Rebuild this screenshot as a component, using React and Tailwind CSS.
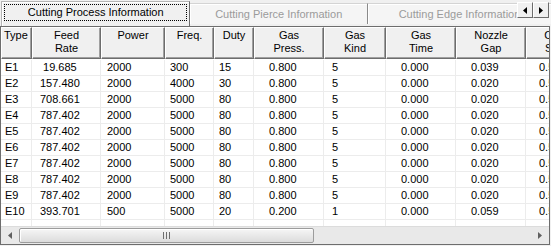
import React from "react";

const cols = [
  { w: "w-[31px]", h: ["Type"], left: true, pl: "pl-[4px]" },
  { w: "w-[69px]", h: ["Feed", "Rate"], pl: "pl-[8px]" },
  { w: "w-[64px]", h: ["Power"], pl: "pl-[6px]" },
  { w: "w-[49px]", h: ["Freq."], pl: "pl-[5px]" },
  { w: "w-[40px]", h: ["Duty"], pl: "pl-[5px]" },
  { w: "w-[70px]", h: ["Gas", "Press."], pl: "pl-[15px]" },
  { w: "w-[62px]", h: ["Gas", "Kind"], pl: "pl-[8px]" },
  { w: "w-[70px]", h: ["Gas", "Time"], pl: "pl-[15px]" },
  { w: "w-[70px]", h: ["Nozzle", "Gap"], pl: "pl-[15px]" },
  { w: "w-[70px]", h: ["Corner", "Speed"], pl: "pl-[13px]" },
];

const rows = [
  ["E1", " 19.685", "2000", "300", "15", "0.800", "5", "0.000", "0.039", "0.500"],
  ["E2", "157.480", "2000", "4000", "30", "0.800", "5", "0.000", "0.020", "0.500"],
  ["E3", "708.661", "2000", "5000", "80", "0.800", "5", "0.000", "0.020", "0.500"],
  ["E4", "787.402", "2000", "5000", "80", "0.800", "5", "0.000", "0.020", "0.500"],
  ["E5", "787.402", "2000", "5000", "80", "0.800", "5", "0.000", "0.020", "0.500"],
  ["E6", "787.402", "2000", "5000", "80", "0.800", "5", "0.000", "0.020", "0.500"],
  ["E7", "787.402", "2000", "5000", "80", "0.800", "5", "0.000", "0.020", "0.500"],
  ["E8", "787.402", "2000", "5000", "80", "0.800", "5", "0.000", "0.020", "0.500"],
  ["E9", "787.402", "2000", "5000", "80", "0.800", "5", "0.000", "0.020", "0.500"],
  ["E10", "393.701", "500", "5000", "20", "0.200", "1", "0.000", "0.059", "0.500"],
  ["", "", "", "", "", "", "", "", "", ""],
];

function Tri({ dir }) {
  return (
    <svg width="4" height="7" viewBox="0 0 4 7">
      {dir === "left" ? (
        <polygon points="4,0 0,3.5 4,7" fill="#000" />
      ) : (
        <polygon points="0,0 4,3.5 0,7" fill="#000" />
      )}
    </svg>
  );
}

function TabStrip() {
  return (
    <div className="relative h-[26px] flex items-start pl-[1px] overflow-hidden">
      <div className="relative z-10 w-[193px] h-[26px] mt-[1px] bg-[#f0f0f0] border-l border-t border-r border-l-[#b4b4b4] border-t-[#b4b4b4] border-r-[#6d6d6d] shadow-[inset_1px_1px_0_#ffffff] p-[2px]">
        <div className="h-[17px] border border-dotted border-black flex items-center justify-center text-black">
          Cutting Process Information
        </div>
      </div>
      <div className="w-[181px] h-[21px] mt-[3px] bg-[#f5f5f5] border-t border-r border-t-[#d4d4d4] border-r-[#8a8a8a] shadow-[inset_1px_1px_0_#ffffff] flex items-center justify-center text-[#9b9b9b]">
        Cutting Pierce Information
      </div>
      <div className="w-[183px] shrink-0 h-[21px] mt-[3px] bg-[#f5f5f5] border-t border-t-[#d4d4d4] shadow-[inset_1px_1px_0_#ffffff] flex items-center justify-center text-[#9b9b9b]">
        Cutting Edge Information
      </div>
      <div className="absolute top-[2px] left-[517px] flex">
        <div className="w-[16px] h-[16px] bg-[#f0f0f0] border border-t-white border-l-white border-r-[#6d6d6d] border-b-[#6d6d6d] flex items-center justify-center">
          <Tri dir="left" />
        </div>
        <div className="w-[16px] h-[16px] bg-[#f0f0f0] border border-t-white border-l-white border-r-[#6d6d6d] border-b-[#6d6d6d] flex items-center justify-center">
          <Tri dir="right" />
        </div>
      </div>
    </div>
  );
}

function Header() {
  return (
    <div className="flex h-[32px] shrink-0 bg-[#f0f0f0]">
      {cols.map((c, i) => (
        <div
          key={i}
          className={`${c.w} shrink-0 h-[32px] border-t border-l border-r border-b border-t-white border-l-white border-r-[#6d6d6d] border-b-[#6d6d6d] shadow-[inset_-1px_-1px_0_#a0a0a0] pt-[1px] leading-[13px] flex flex-col ${c.left ? "items-start pl-[2px]" : "items-center"}`}
        >
          {c.h.map((t, j) => (
            <span key={j} className="whitespace-nowrap">{t}</span>
          ))}
        </div>
      ))}
    </div>
  );
}

function Body() {
  return (
    <div className="flex-1 overflow-hidden bg-white pt-[1px]">
      {rows.map((r, ri) => (
        <div key={ri} className="flex h-[16px] border-b border-[#ececec]">
          {cols.map((c, ci) => (
            <div
              key={ci}
              className={`${c.w} ${c.pl} shrink-0 h-[15px] leading-[15px] border-r border-[#ececec] whitespace-pre overflow-hidden`}
            >
              {r[ci]}
            </div>
          ))}
        </div>
      ))}
    </div>
  );
}

function HScroll() {
  return (
    <div className="h-[18px] shrink-0 flex items-center bg-[#e9e9e9] border-t border-[#dcdcdc]">
      <div className="w-[18px] h-full flex items-center justify-center">
        <svg width="4" height="7" viewBox="0 0 4 7">
          <polygon points="4,0 0,3.5 4,7" fill="#606060" />
        </svg>
      </div>
      <div className="w-[295px] h-[15px] rounded-[2px] border border-[#9c9c9c] bg-gradient-to-b from-[#f6f6f6] to-[#dcdcdc] shadow-[inset_1px_1px_0_#ffffff] flex items-center justify-center gap-[2px]">
        <div className="w-[1px] h-[7px] bg-[#6e6e6e]" />
        <div className="w-[1px] h-[7px] bg-[#6e6e6e]" />
        <div className="w-[1px] h-[7px] bg-[#6e6e6e]" />
      </div>
      <div className="flex-1" />
      <div className="w-[18px] h-full flex items-center justify-center">
        <svg width="4" height="7" viewBox="0 0 4 7">
          <polygon points="0,0 4,3.5 0,7" fill="#606060" />
        </svg>
      </div>
    </div>
  );
}

export default function App() {
  return (
    <div className="w-[551px] h-[246px] bg-[#f0f0f0] overflow-hidden font-['Liberation_Sans',Arial,sans-serif] text-[11px] text-black">
      <TabStrip />
      <div className="w-[550px] h-[219px] border border-[#6d6d6d] bg-white flex flex-col overflow-hidden">
        <Header />
        <Body />
        <HScroll />
      </div>
    </div>
  );
}
